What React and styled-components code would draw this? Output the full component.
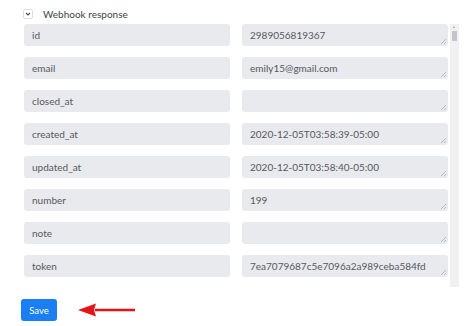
import React from 'react';
import styled, { createGlobalStyle } from 'styled-components';

const GlobalStyle = createGlobalStyle`
  body {
    margin: 0;
    background: #ffffff;
    font-family: Lato, 'Open Sans', sans-serif;
  }
`;

const Page = styled.div`
  width: 474px;
  height: 326px;
  padding: 9px 0 0 23px;
  box-sizing: border-box;
`;

const Header = styled.div`
  display: flex;
  align-items: center;
  gap: 10px;
  height: 10px;
  font-size: 10px;
  color: #3f4248;
`;

const Toggle = styled.span`
  display: flex;
  align-items: center;
  justify-content: center;
  width: 10px;
  height: 10px;
  border: 1px solid #dcdde2;
  border-radius: 2px;
  box-sizing: border-box;
  background: #fff;
`;

const Body = styled.div`
  display: flex;
  align-items: flex-start;
  margin-top: 5px;
  margin-left: 1px;
`;

const Fields = styled.div`
  display: flex;
  flex-direction: column;
  gap: 11px;
`;

const Row = styled.div`
  display: grid;
  grid-template-columns: 206px 206px;
  column-gap: 12px;
`;

const Key = styled.div`
  height: 22px;
  line-height: 22px;
  padding: 0 8px;
  border-radius: 3px;
  background: #e9eaee;
  color: #55585e;
  font-size: 10px;
`;

const Value = styled.div`
  position: relative;
  height: 22px;
  line-height: 22px;
  padding: 0 8px;
  border-radius: 3px;
  background: #e9eaee;
  color: #55585e;
  font-size: 10px;
  white-space: nowrap;
  overflow: hidden;

  /* resize grip */
  &::after {
    content: '';
    position: absolute;
    right: 2px;
    bottom: 2px;
    width: 5px;
    height: 5px;
    background: linear-gradient(
      135deg,
      transparent 0 45%,
      #b9bac0 45% 58%,
      transparent 58% 72%,
      #b9bac0 72% 85%,
      transparent 85%
    );
  }
`;

const Track = styled.div`
  position: relative;
  width: 9px;
  height: 263px;
  margin-left: 2px;
  background: #f1f1f3;
`;

const Thumb = styled.div`
  position: absolute;
  left: 2px;
  top: 7px;
  width: 5px;
  height: 10px;
  background: #c4c4c8;
`;

const Arrow = styled.div`
  position: absolute;
  left: 3px;
  top: 2px;
  width: 0;
  height: 0;
  border-left: 1.5px solid transparent;
  border-right: 1.5px solid transparent;
  border-bottom: 2px solid #a5a5a8;
`;

const Footer = styled.div`
  display: flex;
  align-items: center;
  gap: 21px;
  margin-top: 12px;
  margin-left: -2px;
`;

const SaveButton = styled.button`
  width: 36px;
  height: 22px;
  padding: 0;
  border: none;
  border-radius: 3px;
  background: #1a7ff5;
  color: #fff;
  font-family: Lato, 'Open Sans', sans-serif;
  font-size: 9.5px;
`;

const rows = [
  ['id', '2989056819367'],
  ['email', 'emily15@gmail.com'],
  ['closed_at', ''],
  ['created_at', '2020-12-05T03:58:39-05:00'],
  ['updated_at', '2020-12-05T03:58:40-05:00'],
  ['number', '199'],
  ['note', ''],
  ['token', '7ea7079687c5e7096a2a989ceba584fd'],
];

export default function App() {
  return (
    <Page>
      <GlobalStyle />
      <Header>
        <Toggle>
          <svg width="6" height="4" viewBox="0 0 6 4">
            <path d="M1 1 L3 3 L5 1" fill="none" stroke="#4a4d52" strokeWidth="1.1" />
          </svg>
        </Toggle>
        Webhook response
      </Header>
      <Body>
        <Fields>
          {rows.map(([k, v]) => (
            <Row key={k}>
              <Key>{k}</Key>
              <Value>{v}</Value>
            </Row>
          ))}
        </Fields>
        <Track>
          <Arrow />
          <Thumb />
        </Track>
      </Body>
      <Footer>
        <SaveButton>Save</SaveButton>
        <svg width="58" height="14" viewBox="0 0 58 14">
          <path d="M17 5.8 H57 V8.2 H17 Z" fill="#e8131a" />
          <path d="M0 7 L18 0.5 L16 7 L18 13.5 Z" fill="#e8131a" />
        </svg>
      </Footer>
    </Page>
  );
}
